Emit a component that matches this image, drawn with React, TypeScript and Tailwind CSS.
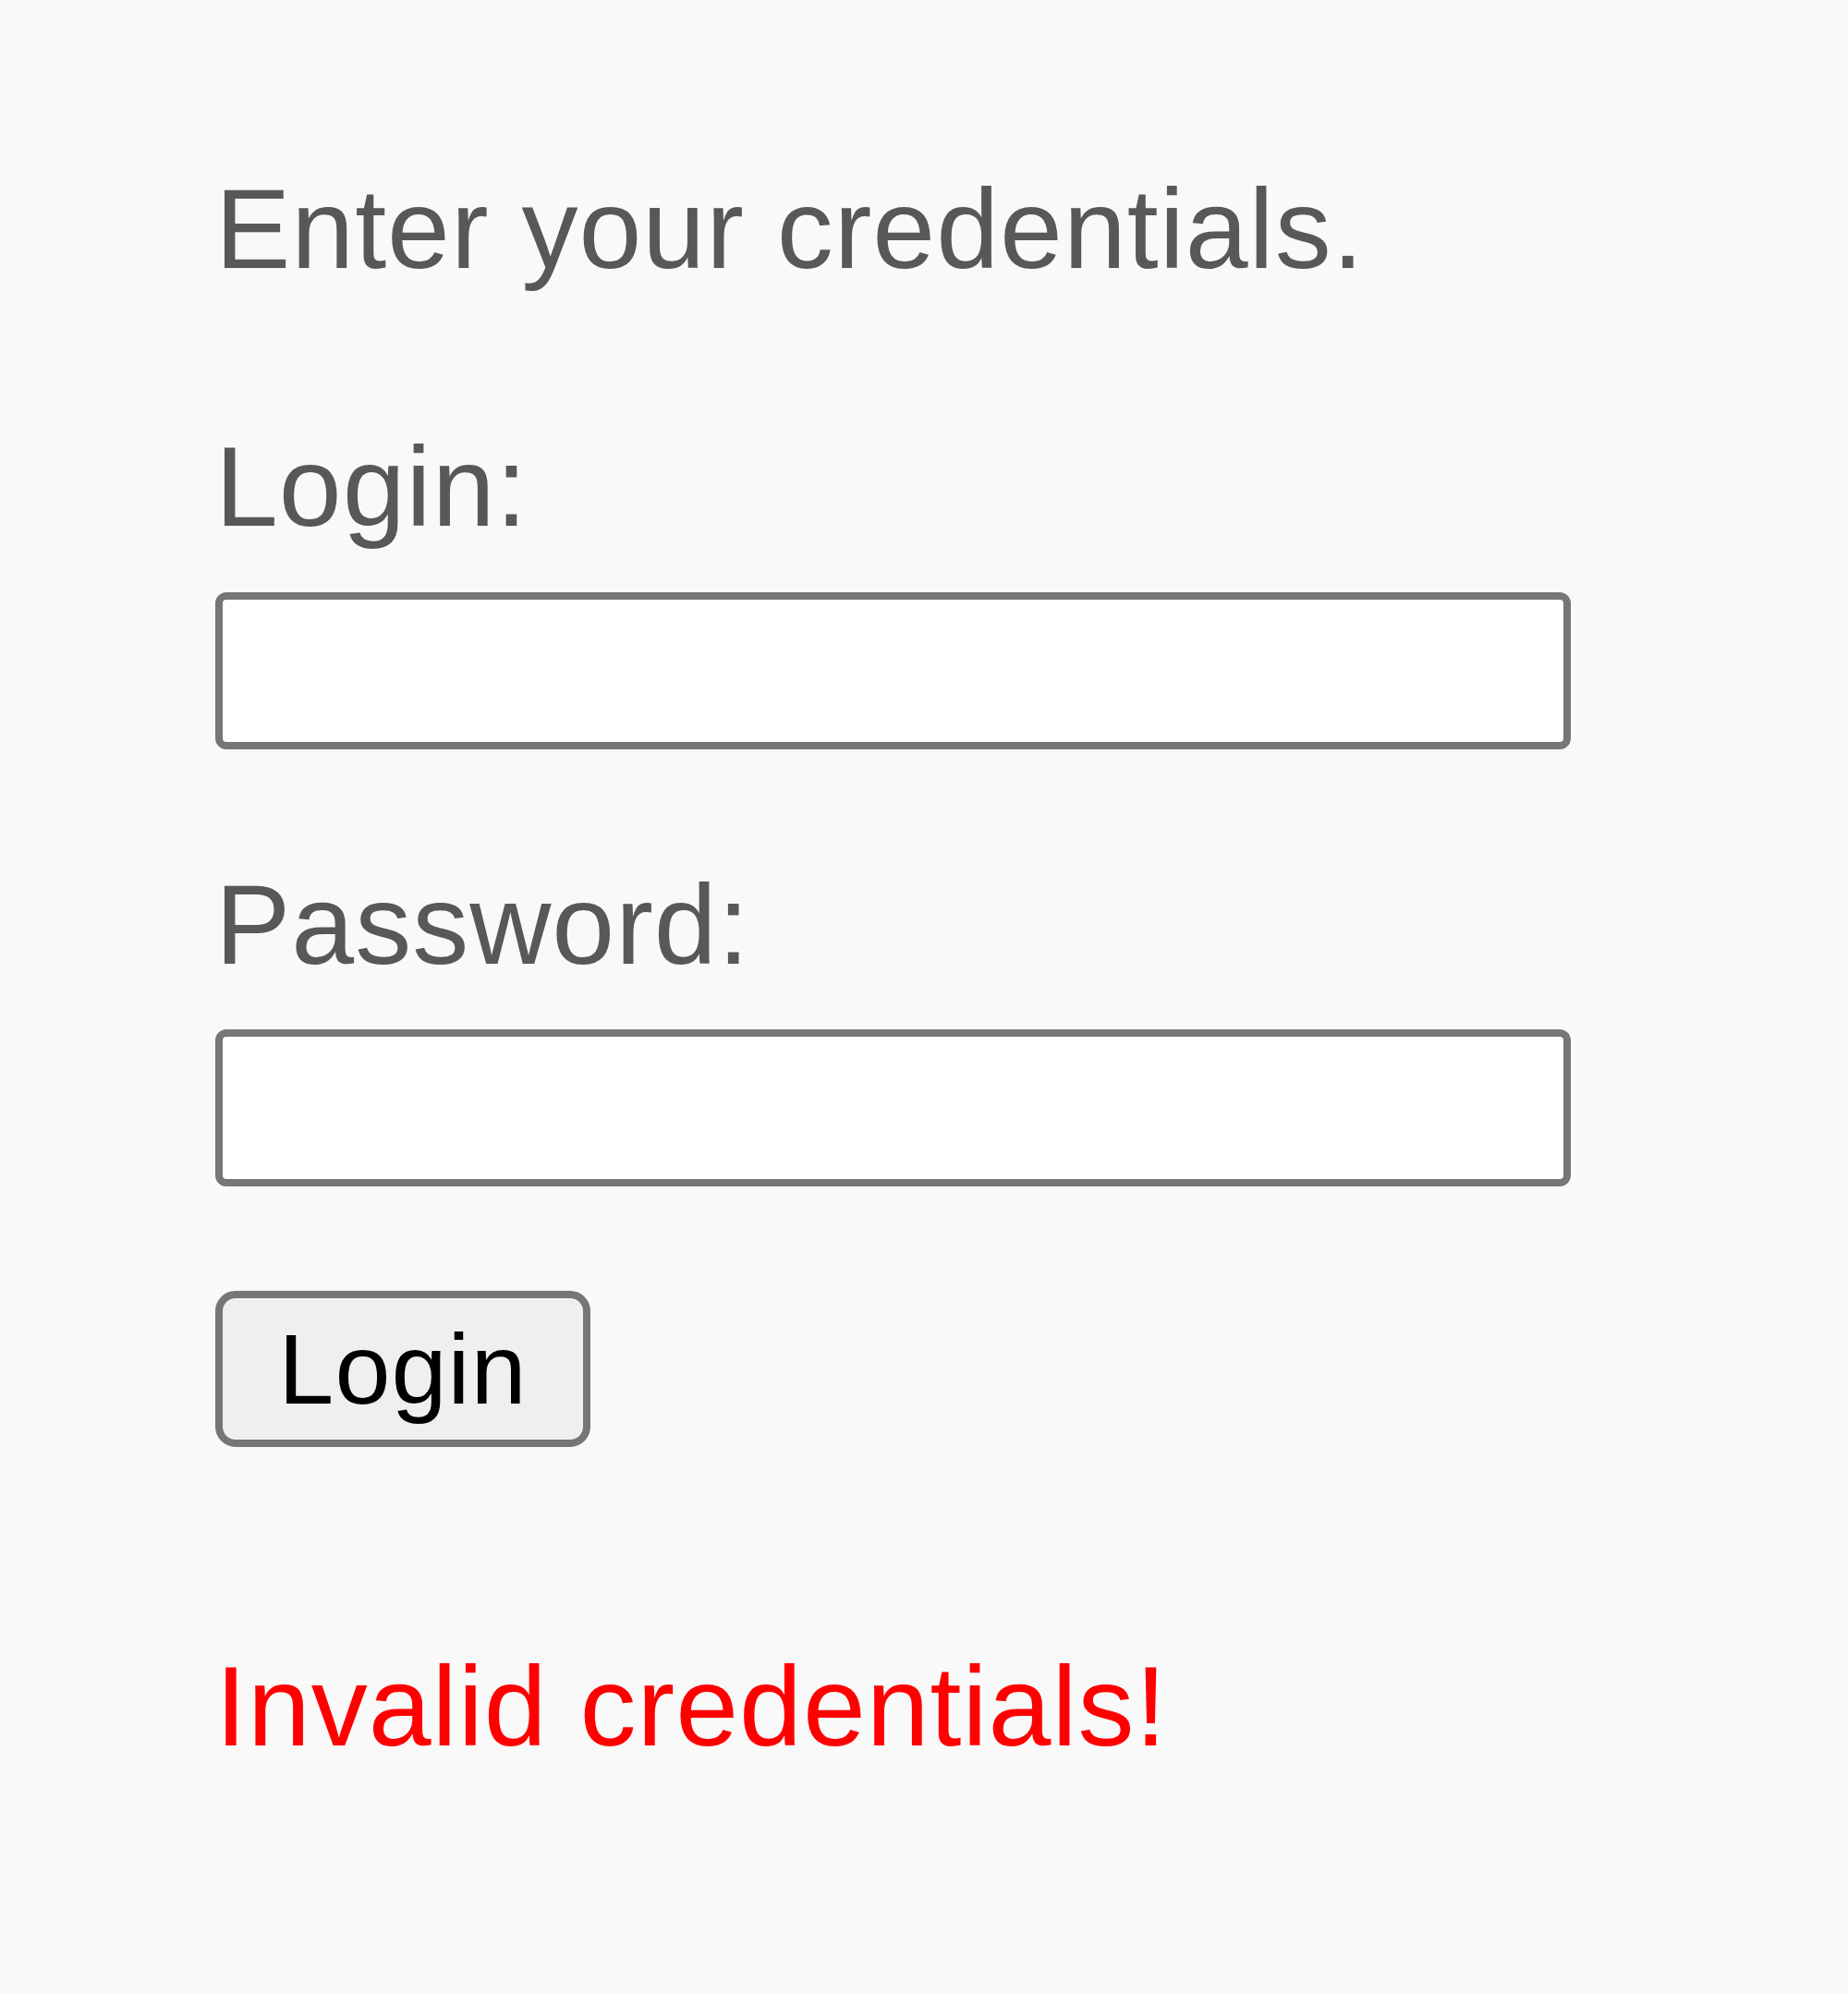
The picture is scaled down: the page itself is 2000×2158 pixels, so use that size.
import React from 'react';

export default function App() {
  return (
    <div className="min-h-[2158px] bg-[#f9f9f9] pl-[233px] pt-[178px] font-['Liberation_Sans',Arial,sans-serif] tracking-[1px]">
      <p className="text-[122px] leading-[141px] text-[#585858]">Enter your credentials.</p>
      <form className="mt-[138px] flex flex-col items-start" onSubmit={(e) => e.preventDefault()}>
        <label htmlFor="login" className="block text-[122px] leading-[141px] text-[#585858]">
          Login:
        </label>
        <input
          id="login"
          type="text"
          className="mt-[43px] h-[170px] w-[1467px] rounded-[12px] border-[8px] border-[#767676] bg-white px-[16px] text-[108px] outline-none"
        />
        <label htmlFor="password" className="mt-[120px] block text-[122px] leading-[141px] text-[#585858]">
          Password:
        </label>
        <input
          id="password"
          type="password"
          className="mt-[42px] h-[170px] w-[1467px] rounded-[12px] border-[8px] border-[#767676] bg-white px-[16px] text-[108px] outline-none"
        />
        <button
          type="submit"
          className="mt-[113px] flex h-[169px] w-[406px] items-center justify-center rounded-[22px] border-[8px] border-[#767676] bg-[#efefef] text-[108px] leading-none text-black"
        >
          Login
        </button>
      </form>
      <p className="mt-[211px] text-[122px] leading-[141px] text-[#ff0000]">Invalid credentials!</p>
    </div>
  );
}
